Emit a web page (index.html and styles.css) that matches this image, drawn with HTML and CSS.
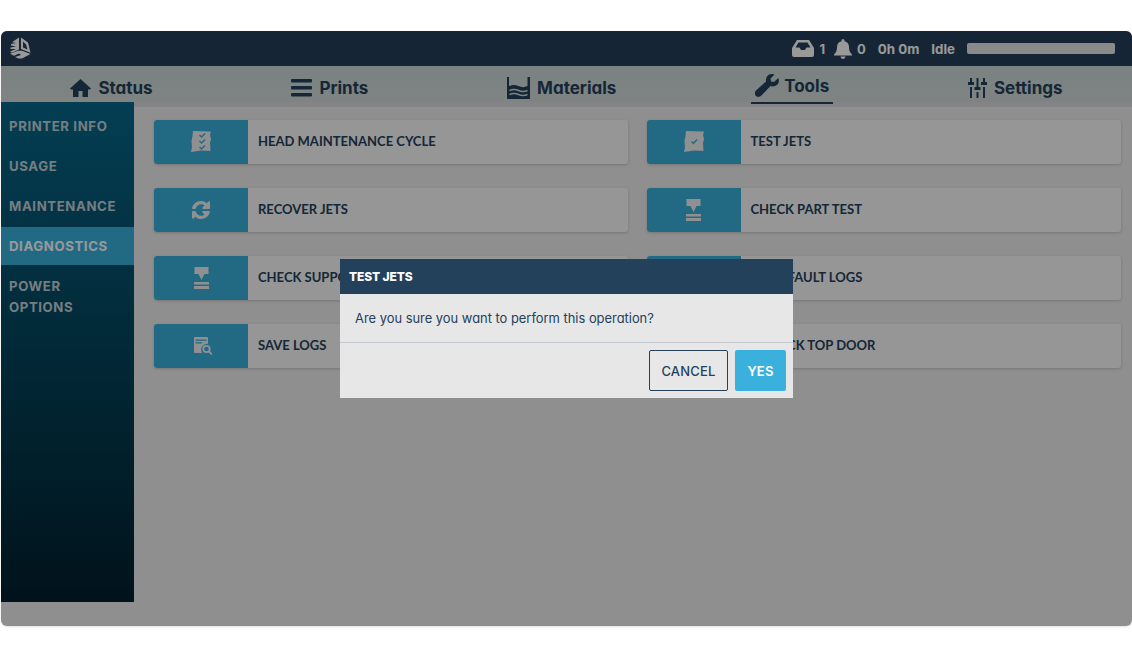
FILE: index.html
```html
<!DOCTYPE html>
<html lang="en">
<head>
<meta charset="utf-8">
<title>Tools - Diagnostics</title>
<link rel="stylesheet" href="styles.css">
</head>
<body>
<svg class="defs" width="0" height="0" aria-hidden="true">
  <symbol id="nozzle" viewBox="0 0 15 22">
    <path d="M.5 0H14.500V7H10.500L7.500 13L4.500 7H.5Z"/>
    <rect y="15" width="15" height="2.500"/>
    <rect y="19" width="15" height="3"/>
  </symbol>
</svg>
<div class="window">
  <header class="topbar">
    <svg class="logo" viewBox="0 0 22 22" width="22" height="22">
      <path d="M10 .5V12.500L3 15.800 1 14.500 7 12H1.500V10.500L7 9.500 2 8.500V7L7 6 3 5.200 10 .5Z" fill="#fff"/>
      <path d="M12 .5 19 5.500 21.500 15.800 12 12ZM14 4.500V10.500L18.500 12.500 17 7.500Z" fill="#fff" fill-rule="evenodd"/>
      <path d="M1 16.800 9 13.800H13L21.500 17 13 21.500H9.500L6 20 12 18 10 16.500 5 18.800Z" fill="#fff"/>
    </svg>
    <div class="status">
      <svg class="inbox" viewBox="0 0 22 17" width="22" height="17">
        <path d="M5 0H17L22 8V15A2 2 0 0 1 20 17H2A2 2 0 0 1 0 15V8ZM6.500 2.500 3.500 7.500H7.500L9 10H13L14.500 7.500H18.500L15.500 2.500Z" fill-rule="evenodd"/>
      </svg>
      <span class="count">1</span>
      <svg class="bell" viewBox="0 0 18 20" width="18" height="20">
        <path d="M9 0A1.500 1.500 0 0 1 10.500 1.500V2.200C13.500 2.800 15 5.200 15 8C15 12 16 13.500 18 15.500V16.500H0V15.500C2 13.500 3 12 3 8C3 5.200 4.500 2.800 7.500 2.200V1.500A1.500 1.500 0 0 1 9 0ZM6.500 17.500H11.500A2.500 2.500 0 0 1 6.500 17.500Z"/>
      </svg>
      <span class="count count-bell">0</span>
      <span class="time">0h 0m</span>
      <span class="state">Idle</span>
      <div class="progress"></div>
    </div>
  </header>

  <nav class="tabs">
    <a class="tab">
      <svg viewBox="0 0 21 18" width="21" height="18"><path d="M10.500 0 21 9.500 20 10.500H18V18H12.500V12H8.500V18H3V10.500H1L0 9.500Z"/></svg>
      Status
    </a>
    <a class="tab">
      <svg viewBox="0 0 21 18" width="21" height="18"><path d="M1 0H20A1 1 0 0 1 21 1V2.500A1 1 0 0 1 20 3.500H1A1 1 0 0 1 0 2.500V1A1 1 0 0 1 1 0ZM1 7H20A1 1 0 0 1 21 8V9.500A1 1 0 0 1 20 10.500H1A1 1 0 0 1 0 9.500V8A1 1 0 0 1 1 7ZM1 14H20A1 1 0 0 1 21 15V16.500A1 1 0 0 1 20 17.500H1A1 1 0 0 1 0 16.500V15A1 1 0 0 1 1 14Z"/></svg>
      Prints
    </a>
    <a class="tab">
      <svg viewBox="0 0 23 22" width="23" height="22">
        <path d="M0 0H2V9C6 7.500 8 7.500 11.500 9C15 10.500 17 10.500 20.500 9V0H23V22H0Z"/>
        <path class="wave" d="M2.500 13.500C6 12 8 12 11.500 13.500C15 15 17 15 20.500 13.500M2.500 17.500C6 16 8 16 11.500 17.500C15 19 17 19 20.500 17.500"/>
      </svg>
      Materials
    </a>
    <a class="tab tab-active">
      <svg viewBox="0 0 24 23" width="24" height="23">
        <path d="M16.500 0C18 0 19 .3 19.500 .6L15.500 4.500 16 7.500 19 8 23.300 4C23.700 5 24 6 23.800 7.500 23.500 11 19.500 13.500 15.500 12L6.500 21.500C4.500 23.500 1.500 23 .5 21.500-.5 20 -.3 18 1 16.500L11 7.500C10.500 3.500 13 0 16.500 0Z"/>
      </svg>
      Tools
    </a>
    <a class="tab">
      <svg viewBox="0 0 19 20" width="19" height="20">
        <path d="M2 0H4V4H6V7H0V4H2ZM2 9H4V20H2ZM8.500 0H10.500V9H12.500V12H6.500V9H8.500ZM8.500 14H10.500V20H8.500ZM15 0H17V4H19V7H13V4H15ZM15 9H17V20H15Z"/>
      </svg>
      Settings
    </a>
  </nav>

  <div class="body">
    <aside class="sidebar">
      <a class="side-item">PRINTER INFO</a>
      <a class="side-item">USAGE</a>
      <a class="side-item">MAINTENANCE</a>
      <a class="side-item side-active">DIAGNOSTICS</a>
      <a class="side-item">POWER OPTIONS</a>
    </aside>
    <main class="grid">
      <button class="action">
        <span class="action-icon">
          <svg viewBox="0 0 20 22" width="20" height="22">
            <path d="M2 0 20 .5 19 4 20 8 19 12 19.500 20 10 19.500 0 21 1 16 .5 10 1.500 5Z"/>
            <path class="check" d="M8.500 4 10.500 6 14 2.500M8.500 10 10.500 12 14 8.500M8.500 16 10.500 18 14 14.500"/>
          </svg>
        </span>
        <span class="action-label">HEAD MAINTENANCE CYCLE</span>
      </button>
      <button class="action">
        <span class="action-icon">
          <svg viewBox="0 0 20 22" width="20" height="22">
            <path d="M2 0 20 .5 19 4 20 8 19 12 19.500 20 10 19.500 0 21 1 16 .5 10 1.500 5Z"/>
            <path class="check" d="M7.500 10.500 9.500 12.500 13 8.500"/>
          </svg>
        </span>
        <span class="action-label">TEST JETS</span>
      </button>
      <button class="action">
        <span class="action-icon">
          <svg viewBox="0 0 18 18" width="18" height="18">
            <path d="M9 0C11.200 0 13.200 .9 14.700 2.300L16.500 .5C17 0 18 .3 18 1V7C18 7.500 17.500 8 17 8H11C10.300 8 10 7 10.500 6.500L12.400 4.600C11.500 3.700 10.300 3.200 9 3.200 6.600 3.200 4.500 4.900 3.900 7.200 3.800 7.700 3.500 8 3 8H.9C.4 8 0 7.500 .1 7 .9 3 4.600 0 9 0ZM.9 10H3C3.500 10 3.800 10.300 3.900 10.800 4.500 13.100 6.600 14.800 9 14.800 10.300 14.800 11.500 14.300 12.400 13.400L10.500 11.500C10 11 10.300 10 11 10H17C17.500 10 18 10.500 17.900 11 17.100 15 13.400 18 9 18 6.800 18 4.800 17.100 3.300 15.700L1.500 17.500C1 18 0 17.700 0 17V11C0 10.500 .4 10 .9 10Z"/>
          </svg>
        </span>
        <span class="action-label">RECOVER JETS</span>
      </button>
      <button class="action">
        <span class="action-icon"><svg width="15" height="22"><use href="#nozzle"/></svg></span>
        <span class="action-label">CHECK PART TEST</span>
      </button>
      <button class="action">
        <span class="action-icon"><svg width="15" height="22"><use href="#nozzle"/></svg></span>
        <span class="action-label">CHECK SUPPORT TEST</span>
      </button>
      <button class="action">
        <span class="action-icon">
          <svg viewBox="0 0 20 22" width="20" height="22">
            <path d="M1 0H13V8H1Z"/>
          </svg>
        </span>
        <span class="action-label">VIEW FAULT LOGS</span>
      </button>
      <button class="action">
        <span class="action-icon">
          <svg class="icon-logs" viewBox="0 0 18 18" width="18" height="18">
            <path d="M1 0H13A1 1 0 0 1 14 1V6.800A6 6 0 0 0 8.200 16H1A1 1 0 0 1 0 15V1A1 1 0 0 1 1 0Z"/>
            <rect class="doc-line" x="1.500" y="2.500" width="11" height="1.300"/>
            <rect class="doc-line" x="1.500" y="5.200" width="6.500" height="1.300"/>
            <circle class="lens" cx="12.500" cy="12" r="3.200"/>
            <path class="lens" d="M15 14.500 18 17.500"/>
          </svg>
        </span>
        <span class="action-label">SAVE LOGS</span>
      </button>
      <button class="action">
        <span class="action-icon">
          <svg viewBox="0 0 20 22" width="20" height="22">
            <path d="M2 0H18V20H2Z"/>
          </svg>
        </span>
        <span class="action-label">UNLOCK TOP DOOR</span>
      </button>
    </main>
  </div>

  <div class="overlay">
    <section class="dialog">
      <h2 class="dialog-title">TEST JETS</h2>
      <p class="dialog-text">Are you sure you want to perform this operation?</p>
      <div class="dialog-actions">
        <button class="btn btn-cancel">CANCEL</button>
        <button class="btn btn-yes">YES</button>
      </div>
    </section>
  </div>
</div>
</body>
</html>
```

FILE: styles.css
```css
* { box-sizing: border-box; }

html, body { margin: 0; height: 660px; overflow: hidden; background: #fff; }

body {
  padding: 31px 0 0 1px;
  font-family: Inter, "Noto Sans", sans-serif;
  font-feature-settings: "cv11" 1;
  color: #24415b;
}

.defs { position: absolute; }

.window {
  position: relative;
  width: 1131px;
  height: 595px;
  background: #eee;
  border-radius: 6px;
  box-shadow: 0 1px 2px rgba(0, 0, 0, .12);
  overflow: hidden;
  display: flex;
  flex-direction: column;
}

.topbar {
  height: 35px;
  flex: none;
  background: #263f5a;
  display: flex;
  align-items: center;
  justify-content: space-between;
  padding: 0 17px 0 8px;
  color: #fff;
  font-size: 13px;
  font-weight: 700;
}

.logo { display: block; margin-top: -1px; }

.status { display: flex; align-items: center; }
.status svg { fill: #fff; display: block; }
.count { margin-left: 5px; }
.bell { margin-left: 9px; }
.count-bell { margin-left: 5px; }
.time { margin-left: 12px; font-size: 13.300px; }
.state { margin-left: 12px; font-size: 13.300px; }
.progress { width: 148px; height: 11px; margin-left: 12px; background: #e6e6e6; border-radius: 2px; }

.tabs {
  position: relative;
  z-index: 1;
  height: 36px;
  flex: none;
  display: flex;
  justify-content: space-around;
  align-items: stretch;
  background: linear-gradient(#cbdad8, #d4dcda);
  box-shadow: 0 5px 0 #dcdce2;
  font-size: 17px;
  font-weight: 700;
}

.tab { display: flex; align-items: center; gap: 7px; color: #24415b; padding-top: 6px; height: 37px; }
.tab svg { fill: #24415b; display: block; flex: none; }
.tab .wave { fill: none; stroke: #d0dbd9; stroke-width: 1.400; }

.tab-active {
  position: relative;
  height: 38px;
  gap: 5px;
  margin: 0 -4px;
  padding: 3px 4px 0;
  border-bottom: 2px solid #24415b;
}

.body { flex: 1; display: flex; align-items: flex-start; min-height: 0; }

.sidebar {
  position: relative;
  z-index: 1;
  width: 133px;
  height: 500px;
  flex: none;
  padding-top: 5px;
  background: linear-gradient(#07688a, #00202e);
  display: flex;
  flex-direction: column;
  gap: 2px;
}

.side-item {
  min-height: 38px;
  display: block;
  padding: 9px 8px 8px;
  color: #c4d3d9;
  font-size: 13.200px;
  font-weight: 700;
  line-height: 21px;
  letter-spacing: .6px;
}

.side-active { background: #3ab1dd; color: #fff; }

.grid {
  flex: 1;
  padding: 18px 10px 0 20px;
  display: grid;
  grid-template-columns: 474px 474.500px;
  grid-auto-rows: 43.500px;
  column-gap: 18.500px;
  row-gap: 24.500px;
}

.action {
  display: flex;
  align-items: stretch;
  padding: 0;
  border: 0;
  background: #fafafa;
  border-radius: 3px;
  box-shadow: 0 1px 3px rgba(0, 0, 0, .18);
  overflow: hidden;
  font: inherit;
  text-align: left;
  color: #24415b;
}

.action-icon {
  width: 94px;
  flex: none;
  display: flex;
  align-items: center;
  justify-content: center;
  background: #3ab1dd;
}

.action-icon svg { fill: #f0f0f0; display: block; }
.action-icon .icon-logs { margin-left: 3px; }

.check { fill: none; stroke: #3ab1dd; stroke-width: 1.500; }
.doc-line { fill: #3ab1dd; }
.action-icon .lens { fill: none; stroke: #f0f0f0; stroke-width: 1.800; }

.action-label {
  display: flex;
  align-items: center;
  padding: 0 0 1px 10px;
  font-family: Lato, sans-serif;
  font-size: 13px;
  font-weight: 700;
}

.overlay {
  position: absolute;
  inset: 0;
  z-index: 2;
  background: rgba(0, 0, 0, .4);
}

.dialog {
  position: absolute;
  left: 339px;
  top: 228px;
  width: 453px;
  height: 139px;
  background: #e7e7e7;
  display: flex;
  flex-direction: column;
}

.dialog-title {
  margin: 0;
  height: 35px;
  flex: none;
  display: flex;
  align-items: center;
  padding-left: 9px;
  background: #24415b;
  color: #fff;
  font-size: 12px;
  font-weight: 800;
  letter-spacing: -.1px;
}

.dialog-text {
  margin: 0;
  height: 49px;
  flex: none;
  display: flex;
  align-items: center;
  padding-left: 15px;
  border-bottom: 1px solid #c4cacf;
  font-size: 12.900px;
  font-weight: 400;
}

.dialog-actions {
  flex: 1;
  display: flex;
  justify-content: flex-end;
  gap: 7px;
  padding: 7px 7px 7px 0;
}

.btn {
  height: 41px;
  border-radius: 2px;
  font: inherit;
  font-size: 13px;
  font-weight: 500;
  letter-spacing: .2px;
}

.btn-cancel { width: 79px; background: transparent; border: 1px solid #24415b; color: #24415b; }
.btn-yes { width: 51px; background: #3ab1dd; border: 0; color: #fff; font-weight: 600; }
```
